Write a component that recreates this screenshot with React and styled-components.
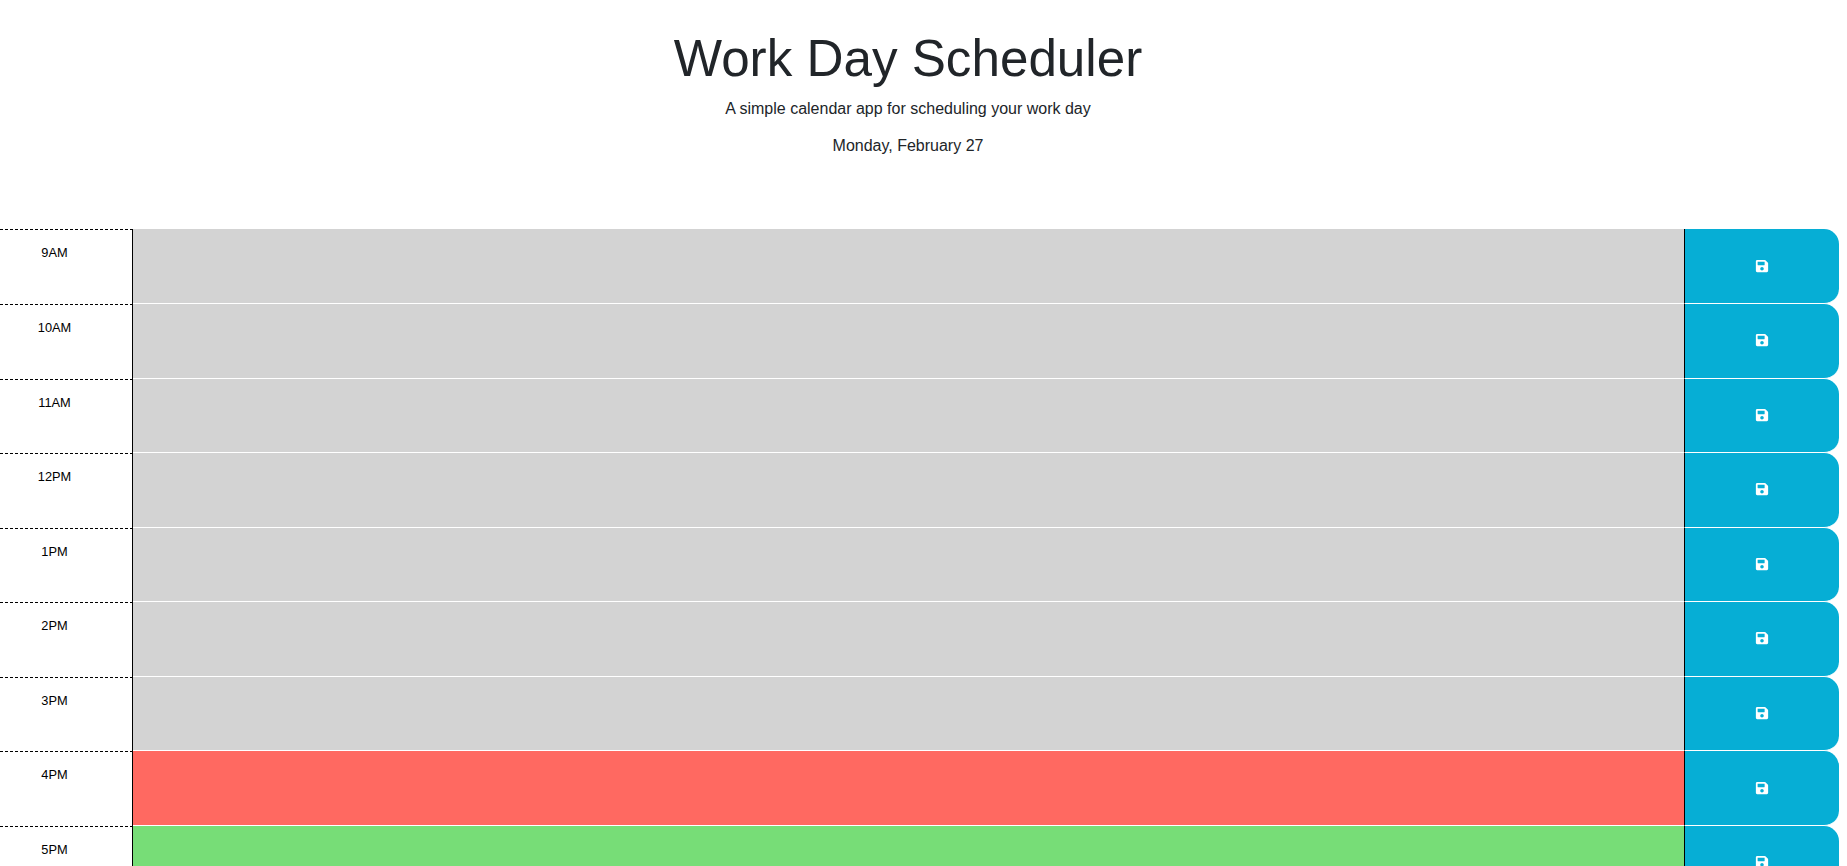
import React from 'react'
import styled, { createGlobalStyle } from 'styled-components'
import { FaSave } from 'react-icons/fa'

const GlobalStyle = createGlobalStyle`
  html, body {
    margin: 0;
    padding: 0;
    background: #fff;
    overflow: hidden;
  }
  body {
    font-family: "Liberation Sans", Arial, sans-serif;
    color: #212529;
  }
`

const Header = styled.header`
  height: 229.45px;
  padding: 27px 31px 0 0;
  box-sizing: border-box;
  text-align: center;
`

const Title = styled.h1`
  margin: 0 0 6px;
  font-size: 51.2px;
  font-weight: 400;
  line-height: 64px;
`

const Lead = styled.p`
  margin: 0 0 13px;
  font-size: 16px;
  line-height: 24px;
`

const CurrentDay = styled.p`
  margin: 0;
  font-size: 16px;
  line-height: 24px;
`

const Schedule = styled.div`
  padding-right: 8px;
`

const Row = styled.div`
  display: flex;
  height: 74.55px;
`

const Hour = styled.div`
  width: 133px;
  flex: none;
  box-sizing: border-box;
  padding: 14px 23px 0 0;
  border-top: 1px dashed #000;
  border-right: 1px solid #000;
  font-size: 12.8px;
  line-height: 17px;
  color: #000;
  text-align: center;
`

const Slot = styled.textarea`
  flex: 1;
  min-width: 0;
  margin: 0;
  padding: 0;
  box-sizing: border-box;
  border: none;
  border-bottom: 1px solid #fff;
  outline: none;
  resize: none;
  background: ${({ $tense }) =>
    $tense === 'present' ? '#ff6961' : $tense === 'future' ? '#77dd77' : '#d3d3d3'};
`

const SaveBtn = styled.button`
  width: 155px;
  flex: none;
  margin: 0;
  padding: 0 0 1px;
  box-sizing: border-box;
  display: flex;
  align-items: center;
  justify-content: center;
  background: #06aed5;
  color: #fff;
  border: none;
  border-left: 1px solid #000;
  border-bottom: 1px solid #fff;
  border-radius: 0 15px 15px 0;
  font-size: 14px;
`

const hours = [
  ['9AM', 'past'],
  ['10AM', 'past'],
  ['11AM', 'past'],
  ['12PM', 'past'],
  ['1PM', 'past'],
  ['2PM', 'past'],
  ['3PM', 'past'],
  ['4PM', 'present'],
  ['5PM', 'future'],
]

const App = () => {
  return (
    <>
      <GlobalStyle />
      <Header>
        <Title>Work Day Scheduler</Title>
        <Lead>A simple calendar app for scheduling your work day</Lead>
        <CurrentDay>Monday, February 27</CurrentDay>
      </Header>
      <Schedule>
        {hours.map(([label, tense]) => (
          <Row key={label}>
            <Hour>{label}</Hour>
            <Slot $tense={tense} />
            <SaveBtn aria-label={`Save ${label}`}>
              <FaSave />
            </SaveBtn>
          </Row>
        ))}
      </Schedule>
    </>
  )
}

export default App
